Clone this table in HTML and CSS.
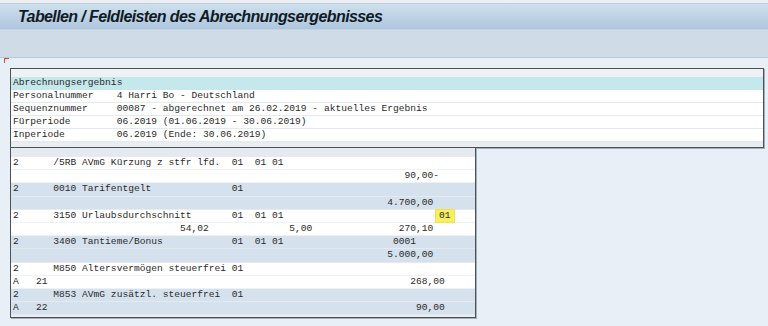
FILE: index.html
```html
<!DOCTYPE html>
<html lang="de">
<head>
<meta charset="utf-8">
<title>Tabellen / Feldleisten des Abrechnungsergebnisses</title>
<link rel="stylesheet" href="styles.css">
</head>
<body>
<div class="topstrip"></div>
<header class="titlebar"><h1 class="title">Tabellen / Feldleisten des Abrechnungsergebnisses</h1></header>
<div class="toolbar"></div>
<main class="content">
  <span class="focus-mark"></span>
  <section class="box box-head">
    <div class="strip strip-top"></div>
    <div class="hrow hrow-title">Abrechnungsergebnis</div>
    <div class="hrow">Personalnummer    4 Harri Bo - Deutschland</div>
    <div class="hrow">Sequenznummer     00087 - abgerechnet am 26.02.2019 - aktuelles Ergebnis</div>
    <div class="hrow">Fürperiode        06.2019 (01.06.2019 - 30.06.2019)</div>
    <div class="hrow">Inperiode         06.2019 (Ende: 30.06.2019)</div>
    <div class="strip strip-bottom"></div>
  </section>
  <section class="box box-list">
    <div class="strip strip-list"></div>
    <div class="lrow">2      /5RB AVmG Kürzung z stfr lfd.  01  01 01</div>
    <div class="lrow">                                                                    90,00-</div>
    <div class="lrow alt">2      0010 Tarifentgelt              01</div>
    <div class="lrow alt">                                                                 4.700,00</div>
    <div class="lrow">2      3150 Urlaubsdurchschnitt       01  01 01                           <span class="mark">01</span></div>
    <div class="lrow">                             54,02              5,00               270,10</div>
    <div class="lrow alt">2      3400 Tantieme/Bonus            01  01 01                   0001</div>
    <div class="lrow alt">                                                                 5.000,00</div>
    <div class="lrow">2      M850 Altersvermögen steuerfrei 01</div>
    <div class="lrow">A   21                                                               268,00</div>
    <div class="lrow alt">2      M853 AVmG zusätzl. steuerfrei  01</div>
    <div class="lrow alt">A   22                                                                90,00</div>
    <div class="strip strip-end"></div>
  </section>
</main>
</body>
</html>
```
FILE: styles.css
```css
html, body {
  margin: 0;
  padding: 0;
}
body {
  width: 768px;
  height: 326px;
  overflow: hidden;
  background: #e9eff6;
  font-family: "Liberation Mono", "DejaVu Sans Mono", monospace;
}
.topstrip {
  height: 3px;
  background: #eceff3;
  border-bottom: 1px solid #c2ccd6;
}
.titlebar {
  height: 25px;
  background: linear-gradient(#cde0ed, #aec6dd);
  display: flex;
  align-items: center;
  padding-left: 18px;
}
.title {
  margin: 0;
  font-family: "Liberation Sans", Arial, sans-serif;
  font-weight: bold;
  font-style: italic;
  font-size: 16px;
  color: #111b26;
  letter-spacing: -0.6px;
}
.toolbar {
  height: 27px;
  background: #cfdce7;
  border-top: 1px solid #c4d3e0;
  border-bottom: 1px solid #b9c8d5;
}
.content {
  position: relative;
  padding: 10px 0 0 10px;
}
.focus-mark {
  position: absolute;
  left: 4px;
  top: 0;
  width: 4px;
  height: 4px;
  border-left: 1px solid #e0443a;
  border-top: 1px solid #e0443a;
}
.box {
  background: #ffffff;
  border: 1px solid #4e5257;
  box-shadow: 1px 1px 0 #a3afba;
  font-size: 9.6px;
  color: #2a2a2a;
}
.box-head {
  width: 752px;
}
.box-list {
  width: 464px;
  border-top: none;
}
.strip-top {
  height: 8px;
  background: #eef2f5;
}
.strip-bottom {
  height: 5px;
  background: #e8edf2;
}
.strip-list {
  height: 9px;
  background: #e5eaf0;
}
.strip-end {
  height: 2px;
  background: #e8edf2;
}
.hrow {
  height: 12px;
  line-height: 12px;
  padding-left: 2px;
  white-space: pre;
  border-bottom: 1px solid #e3e9ef;
  background: #ffffff;
}
.hrow-title {
  background: #c4e8ec;
  border-bottom-color: #c4e8ec;
}
.lrow {
  height: 12.2px;
  line-height: 12.2px;
  padding-left: 2px;
  white-space: pre;
  border-bottom: 1px solid #eef2f6;
  background: #ffffff;
}
.lrow.alt {
  background: #d6e1ee;
  border-bottom-color: #e3eaf2;
}
.mark {
  display: inline-block;
  margin-left: -4px;
  padding: 0 4px;
  height: 14px;
  line-height: 14px;
  vertical-align: top;
  margin-top: -1px;
  background: #f7ef5e;
  box-shadow: inset 0 0 0 1px #efe24a;
  color: #2a2a2a;
}
```
